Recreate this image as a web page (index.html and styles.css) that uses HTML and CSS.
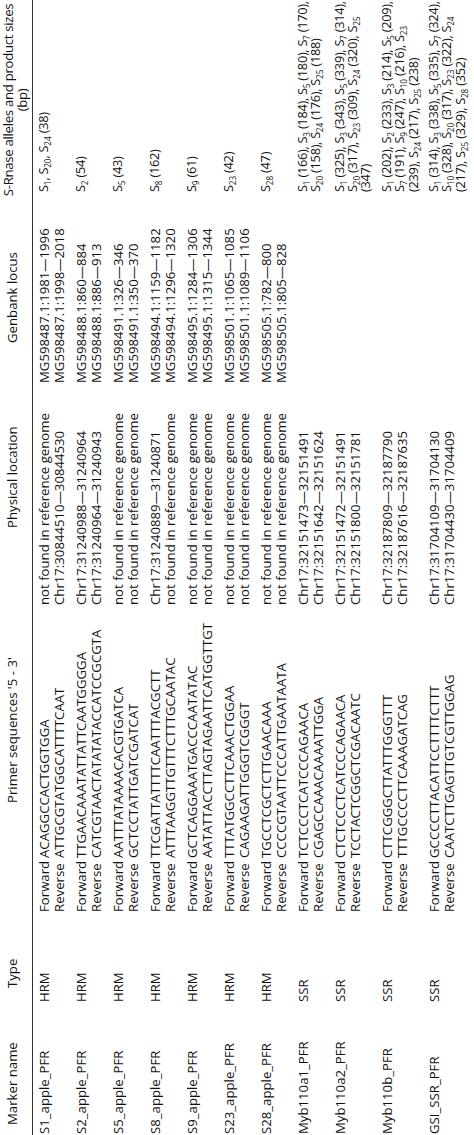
FILE: index.html
```html
<!DOCTYPE html>
<html lang="en">
<head>
<meta charset="utf-8">
<title>S-RNase markers</title>
<link rel="stylesheet" href="styles.css">
</head>
<body>
<div class="viewport">
  <div class="table">
    <div class="row head">
      <div class="hc h-marker">Marker name</div>
      <div class="hc h-type">Type</div>
      <div class="hc"></div>
      <div class="hc h-primer">Primer sequences '5 - 3'</div>
      <div class="hc h-phys">Physical location</div>
      <div class="hc h-gen">Genbank locus</div>
      <div class="hc h-srn"><span>S-Rnase alleles and product sizes</span><span>(bp)</span></div>
    </div>

    <div class="row">
      <div class="c marker">S1_apple_PFR</div>
      <div class="c">HRM</div>
      <div class="c">Forward<br>Reverse</div>
      <div class="c">ACAGGCCACTGGTGGA<br>ATTGCGTATGGCATTTTCAAT</div>
      <div class="c">not found in reference genome<br>Chr17:30844510—30844530</div>
      <div class="c">MG598487.1:1981—1996<br>MG598487.1:1998—2018</div>
      <div class="c srn">S<sub>1</sub>, S<sub>20</sub>, S<sub>24</sub> (38)</div>
    </div>

    <div class="row">
      <div class="c marker">S2_apple_PFR</div>
      <div class="c">HRM</div>
      <div class="c">Forward<br>Reverse</div>
      <div class="c">TTGAACAAATATTATTCAATGGGGA<br>CATCGTAACTATATATACCATCCGCGTA</div>
      <div class="c">Chr17:31240988—31240964<br>Chr17:31240964—31240943</div>
      <div class="c">MG598488.1:860—884<br>MG598488.1:886—913</div>
      <div class="c srn">S<sub>2</sub> (54)</div>
    </div>

    <div class="row">
      <div class="c marker">S5_apple_PFR</div>
      <div class="c">HRM</div>
      <div class="c">Forward<br>Reverse</div>
      <div class="c">AATTTATAAAACACGTGATCA<br>GCTCCTATTGATCGATCAT</div>
      <div class="c">not found in reference genome<br>not found in reference genome</div>
      <div class="c">MG598491.1:326—346<br>MG598491.1:350—370</div>
      <div class="c srn">S<sub>5</sub> (43)</div>
    </div>

    <div class="row">
      <div class="c marker">S8_apple_PFR</div>
      <div class="c">HRM</div>
      <div class="c">Forward<br>Reverse</div>
      <div class="c">TTCGATTATTTTCAATTTACGCTT<br>ATTTAAGGTTGTTTCTTTGCAATAC</div>
      <div class="c">Chr17:31240889—31240871<br>not found in reference genome</div>
      <div class="c">MG598494.1:1159—1182<br>MG598494.1:1296—1320</div>
      <div class="c srn">S<sub>8</sub> (162)</div>
    </div>

    <div class="row">
      <div class="c marker">S9_apple_PFR</div>
      <div class="c">HRM</div>
      <div class="c">Forward<br>Reverse</div>
      <div class="c">GCTCAGGAAATGACCCAATATAC<br>AATATTACCTTAGTAGAATTCATGGTTGT</div>
      <div class="c">not found in reference genome<br>not found in reference genome</div>
      <div class="c">MG598495.1:1284—1306<br>MG598495.1:1315—1344</div>
      <div class="c srn">S<sub>9</sub> (61)</div>
    </div>

    <div class="row">
      <div class="c marker">S23_apple_PFR</div>
      <div class="c">HRM</div>
      <div class="c">Forward<br>Reverse</div>
      <div class="c">TTTATGGCCTTCAAACTGGAA<br>CAGAAGATTGGGTCGGGT</div>
      <div class="c">not found in reference genome<br>not found in reference genome</div>
      <div class="c">MG598501.1:1065—1085<br>MG598501.1:1089—1106</div>
      <div class="c srn">S<sub>23</sub> (42)</div>
    </div>

    <div class="row">
      <div class="c marker">S28_apple_PFR</div>
      <div class="c">HRM</div>
      <div class="c">Forward<br>Reverse</div>
      <div class="c">TGCCTCGCTCTTGAACAAA<br>CCCCGTAATTCCCATTGAATAATA</div>
      <div class="c">not found in reference genome<br>not found in reference genome</div>
      <div class="c">MG598505.1:782—800<br>MG598505.1:805—828</div>
      <div class="c srn">S<sub>28</sub> (47)</div>
    </div>

    <div class="row">
      <div class="c marker">Myb110a1_PFR</div>
      <div class="c">SSR</div>
      <div class="c">Forward<br>Reverse</div>
      <div class="c">TCTCCCTCATCCCAGAACA<br>CGAGCCAAACAAAATTGGA</div>
      <div class="c">Chr17:32151473—32151491<br>Chr17:32151642—32151624</div>
      <div class="c"></div>
      <div class="c srn">S<sub>1</sub> (166), S<sub>3</sub> (184), S<sub>5</sub> (180), S<sub>7</sub> (170),<br>S<sub>20</sub> (158), S<sub>24</sub> (176), S<sub>25</sub> (188)</div>
    </div>

    <div class="row">
      <div class="c marker">Myb110a2_PFR</div>
      <div class="c">SSR</div>
      <div class="c">Forward<br>Reverse</div>
      <div class="c">CTCTCCCTCATCCCAGAACA<br>TCCTACTCGGCTCGACAATC</div>
      <div class="c">Chr17:32151472—32151491<br>Chr17:32151800—32151781</div>
      <div class="c"></div>
      <div class="c srn">S<sub>1</sub> (325), S<sub>3</sub> (343), S<sub>5</sub> (339), S<sub>7</sub> (314),<br>S<sub>20</sub> (317), S<sub>23</sub> (309), S<sub>24</sub> (320), S<sub>25</sub><br>(347)</div>
    </div>

    <div class="row">
      <div class="c marker">Myb110b_PFR</div>
      <div class="c">SSR</div>
      <div class="c">Forward<br>Reverse</div>
      <div class="c">CTTCGGGCTTATTTGGGTTT<br>TTTGCCCCTTCAAAGATCAG</div>
      <div class="c">Chr17:32187809—32187790<br>Chr17:32187616—32187635</div>
      <div class="c"></div>
      <div class="c srn">S<sub>1</sub> (202), S<sub>2</sub> (233), S<sub>3</sub> (214), S<sub>5</sub> (209),<br>S<sub>7</sub> (191), S<sub>9</sub> (247), S<sub>10</sub> (216), S<sub>23</sub><br>(239), S<sub>24</sub> (217), S<sub>25</sub> (238)</div>
    </div>

    <div class="row">
      <div class="c marker">GSI_SSR_PFR</div>
      <div class="c">SSR</div>
      <div class="c">Forward<br>Reverse</div>
      <div class="c">GCCCCTTACATTCCTTTTCTTT<br>CAATCTTGAGTTGTCGTTGGAG</div>
      <div class="c">Chr17:31704109—31704130<br>Chr17:31704430—31704409</div>
      <div class="c"></div>
      <div class="c srn">S<sub>1</sub> (314), S<sub>3</sub> (338), S<sub>5</sub> (335), S<sub>7</sub> (324),<br>S<sub>10</sub> (328), S<sub>20</sub> (317), S<sub>23</sub> (322), S<sub>24</sub><br>(217), S<sub>25</sub> (329), S<sub>28</sub> (352)</div>
    </div>
  </div>
</div>
</body>
</html>
```

FILE: styles.css
```css
html, body {
  margin: 0;
  padding: 0;
  background: #ffffff;
}

.viewport {
  width: 474px;
  height: 1135px;
  overflow: hidden;
}

.table {
  width: 1135px;
  height: 474px;
  transform-origin: 0 0;
  transform: translate(0, 1135px) rotate(-90deg);
  font-family: "Open Sans", "Noto Sans", sans-serif;
  font-size: 13.2px;
  line-height: 15px;
  color: #111111;
}

.row {
  display: grid;
  grid-template-columns: 133px 90px 54px 253px 222px 191px 192px;
  padding: 4px 0 3px 0;
}

.c {
  white-space: nowrap;
}

.marker {
  padding-left: 1px;
}

.srn {
  font-size: 12.8px;
  line-height: 13.4px;
  letter-spacing: -0.3px;
}

sub {
  font-size: 8.2px;
  line-height: 0;
  vertical-align: -2.5px;
  letter-spacing: 0;
}

.head {
  height: 31.5px;
  padding: 0;
  border-bottom: 1.5px solid #333333;
}

.hc {
  white-space: nowrap;
  padding-top: 5px;
}

.h-marker { padding-left: 10px; }
.h-type { padding-left: 14px; }
.h-primer { padding-left: 55px; }
.h-phys { padding-left: 77px; }
.h-gen { padding-left: 40px; }

.h-srn {
  padding-top: 1px;
  padding-right: 8px;
  line-height: 14px;
  letter-spacing: -0.3px;
  display: flex;
  flex-direction: column;
  align-items: center;
}
```
